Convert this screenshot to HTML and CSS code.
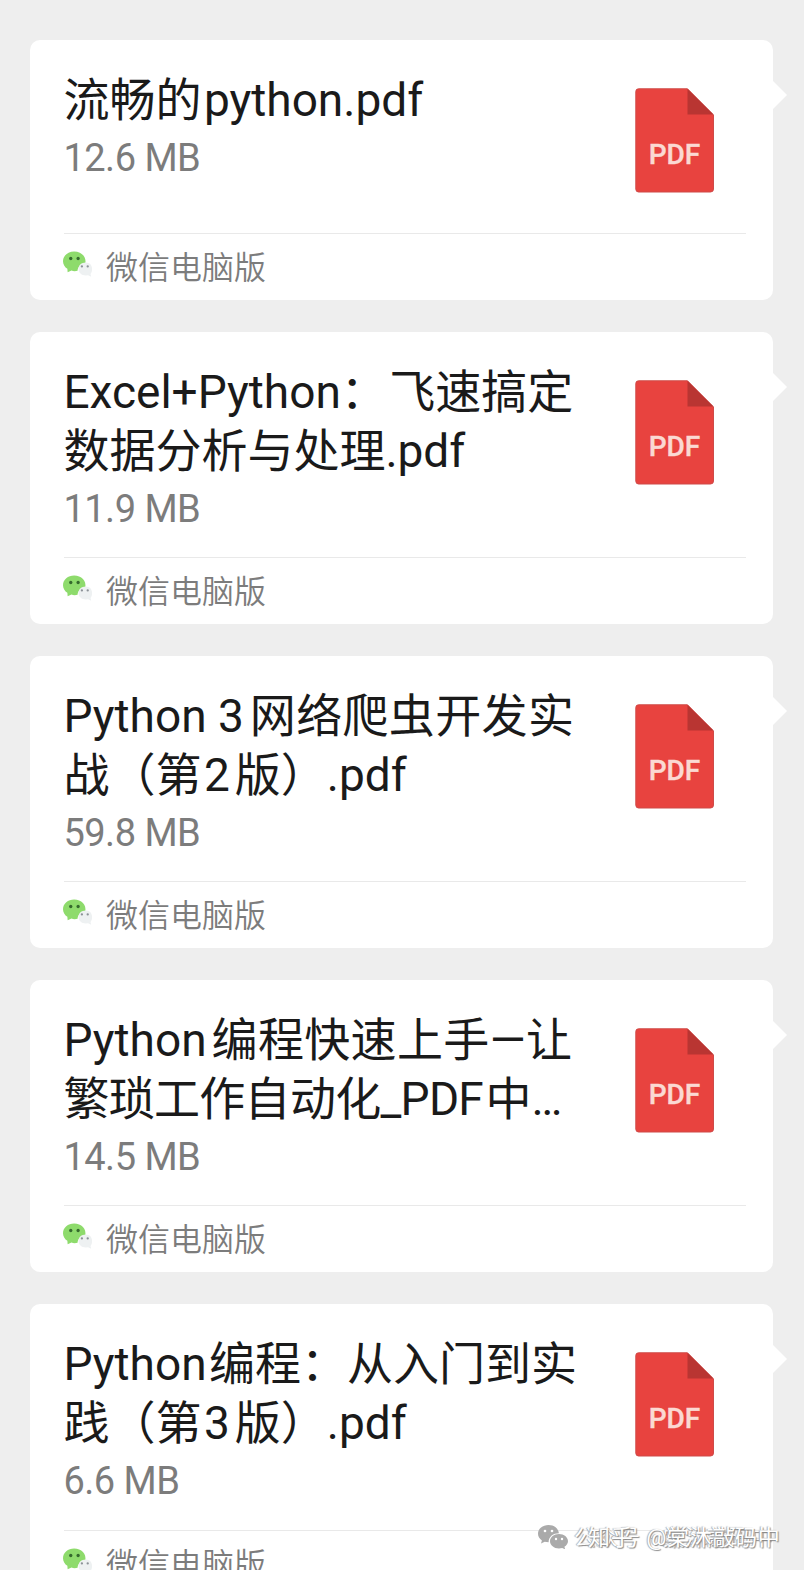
FILE: index.html
```
<!DOCTYPE html>
<html lang="zh-CN">
<head>
<meta charset="utf-8">
<title>微信文件</title>
<link rel="stylesheet" href="styles.css">
</head>
<body>
<svg class="defs" aria-hidden="true">
  <symbol id="pdf" viewBox="0 0 80 106">
    <path fill="#e8433f" stroke="#cf4a48" stroke-width="1" d="M3.500 .8H52.500L78.500 27V101Q78.500 104 75.500 104H3.500Q.8 104 .8 101V3.500Q.8 .8 3.500 .8Z"/>
    <path fill="#b93532" d="M52.500 1V26.500H78.500Z"/>
    <text class="pdf-text" x="39.500" y="75.500" text-anchor="middle">PDF</text>
  </symbol>
  <symbol id="wechat" viewBox="0 0 32 30">
    <path fill="#8edb6c" d="M11.500 1C5.200 1 0 5.300 0 11c0 3.300 1.800 6.100 4.500 7.900L4.800 22.500 8.800 20.800C10.500 21.500 13 21.500 15 21 15.500 17 18 14 23 13.500 24.500 6.500 19 1 11.500 1Z"/>
    <path fill="#eef1f2" d="M23.500 12.500c-4.500 0-7.500 2.900-7.500 6.600s3.200 6.700 7.500 6.700l2.400-.3 3.200 1.500-.7-2.700c1-1.200 1.600-3 1.600-5.200 0-3.700-2.400-6.600-6.500-6.600Z"/>
    <g fill="#356a2d"><circle cx="8" cy="8.300" r="1.700"/><circle cx="15.600" cy="8.300" r="1.700"/></g>
    <g fill="#8c9298"><circle cx="19.500" cy="16.500" r="1.200"/><circle cx="25.500" cy="16.500" r="1.200"/></g>
  </symbol>
</svg>
<main class="chat">
  <article class="card card-short">
    <div class="content"><div class="info"><h2 class="title"><span class="line">流畅的<span class="gap-s">python.pdf</span></span></h2><p class="size">12.6 MB</p></div><svg class="pdf"><use href="#pdf"/></svg></div>
    <footer class="source"><svg class="wechat"><use href="#wechat"/></svg><span>微信电脑版</span></footer>
  </article>
  <article class="card">
    <div class="content"><div class="info"><h2 class="title"><span class="line">Excel+Python：<span class="gap-s">飞速搞定</span></span><span class="line">数据分析与处理.pdf</span></h2><p class="size">11.9 MB</p></div><svg class="pdf"><use href="#pdf"/></svg></div>
    <footer class="source"><svg class="wechat"><use href="#wechat"/></svg><span>微信电脑版</span></footer>
  </article>
  <article class="card">
    <div class="content"><div class="info"><h2 class="title"><span class="line">Python 3<span class="gap-l wide">网络爬虫开发实</span></span><span class="line">战（第<span class="gap-s">2</span><span class="gap-m">版）.pdf</span></span></h2><p class="size">59.8 MB</p></div><svg class="pdf"><use href="#pdf"/></svg></div>
    <footer class="source"><svg class="wechat"><use href="#wechat"/></svg><span>微信电脑版</span></footer>
  </article>
  <article class="card">
    <div class="content"><div class="info"><h2 class="title"><span class="line">Python<span class="gap-m wide">编程快速上手—让</span></span><span class="line"><span class="tight">繁琐工作自动化_PDF</span><span class="gap-s">中…</span></span></h2><p class="size">14.5 MB</p></div><svg class="pdf"><use href="#pdf"/></svg></div>
    <footer class="source"><svg class="wechat"><use href="#wechat"/></svg><span>微信电脑版</span></footer>
  </article>
  <article class="card">
    <div class="content"><div class="info"><h2 class="title"><span class="line">Python<span class="gap-s">编程：从入门到实</span></span><span class="line">践（第<span class="gap-s">3</span><span class="gap-m">版）.pdf</span></span></h2><p class="size">6.6 MB</p></div><svg class="pdf"><use href="#pdf"/></svg></div>
    <footer class="source"><svg class="wechat"><use href="#wechat"/></svg><span>微信电脑版</span></footer>
  </article>
</main>
<div class="watermark">
  <svg class="mark-icon" viewBox="0 0 30 24"><path fill="#aaa" d="M10.500 0C4.700 0 0 3.900 0 8.700c0 2.700 1.500 5.100 3.900 6.700L3 18.600l3.700-1.900c1.200.3 2.500.5 3.900.5 0-5.700 4.700-9 10.300-9C20.500 3.500 16 0 10.500 0Z"/><path fill="#aaa" d="M21 9c-5 0-9 3.200-9 7.200s4 7.200 9 7.200c1.100 0 2.200-.2 3.200-.5l3 1.500-.8-2.700c2.200-1.300 3.600-3.300 3.600-5.500C30 12.200 26 9 21 9Z"/><g fill="#fff"><circle cx="7" cy="6" r="1.300"/><circle cx="14" cy="6" r="1.300"/><circle cx="18" cy="14" r="1.200"/><circle cx="24" cy="14" r="1.200"/></g></svg>
  <span class="mark-back">公众号 · 棠沐敲码中</span>
  <span class="mark-front">知乎 @棠沐敲码中</span>
</div>
</body>
</html>
```
FILE: styles.css
```
* { box-sizing: border-box; }
html, body { height: 1570px; overflow: hidden; }
body { margin: 0; position: relative; background: #eee; font-family: Roboto, "Noto Sans CJK SC", sans-serif; }
.defs { position: absolute; width: 0; height: 0; }
.chat { display: flex; flex-direction: column; gap: 32px; padding: 39.500px 31px 0 30px; }
.card { position: relative; flex: none; height: 292.300px; background: #fff; border-radius: 10px; padding: 0 27px 0 34px; display: flex; flex-direction: column; }
.card-short { height: 260px; }
.card::after { content: ""; position: absolute; left: 100%; top: 41px; border: solid transparent; border-width: 14px 0 14px 14px; border-left-color: #fff; }
.content { flex: 1; display: flex; justify-content: space-between; padding: 31px 31px 0 0; border-bottom: 1.500px solid #e9e9e9; }
.info { margin-left: -.6px; }
.title { margin: 0; font-size: 46px; font-weight: 400; line-height: 59px; color: #1a1a1a; }
.line { display: block; white-space: nowrap; }
.gap-s { margin-left: 2.500px; }
.gap-m { margin-left: 5px; }
.gap-l { margin-left: 6px; }
.wide { letter-spacing: .35px; }
.tight { letter-spacing: -.7px; }
.size { margin: 0; font-size: 38px; line-height: 56px; letter-spacing: -.5px; color: #7c7c7c; }
.pdf { flex: none; width: 80px; height: 106px; margin-top: 17px; }
.pdf-text { font: 500 28px Roboto, sans-serif; fill: #fbd9d3; stroke: #fbd9d3; stroke-width: .4px; }
.source { flex: none; height: 66px; display: flex; align-items: center; gap: 12px; padding-bottom: 4px; margin-left: -1px; font-size: 32px; color: #7c7c7c; font-weight: 350; }
.wechat { width: 31px; height: 30px; }
.watermark { position: absolute; left: 538px; top: 1525px; width: 260px; height: 28px; font-size: 22px; line-height: 26px; white-space: nowrap; }
.mark-icon { position: absolute; left: 0; top: 0; width: 30px; height: 24px; }
.mark-back, .mark-front { position: absolute; color: #fff; text-shadow: 1px 1px 1px #888, -1px 0 1px #aaa; }
.mark-back { left: 36px; top: 0; word-spacing: 3px; }
.mark-front { left: 50px; top: 0; letter-spacing: .7px; word-spacing: 7px; }
```
